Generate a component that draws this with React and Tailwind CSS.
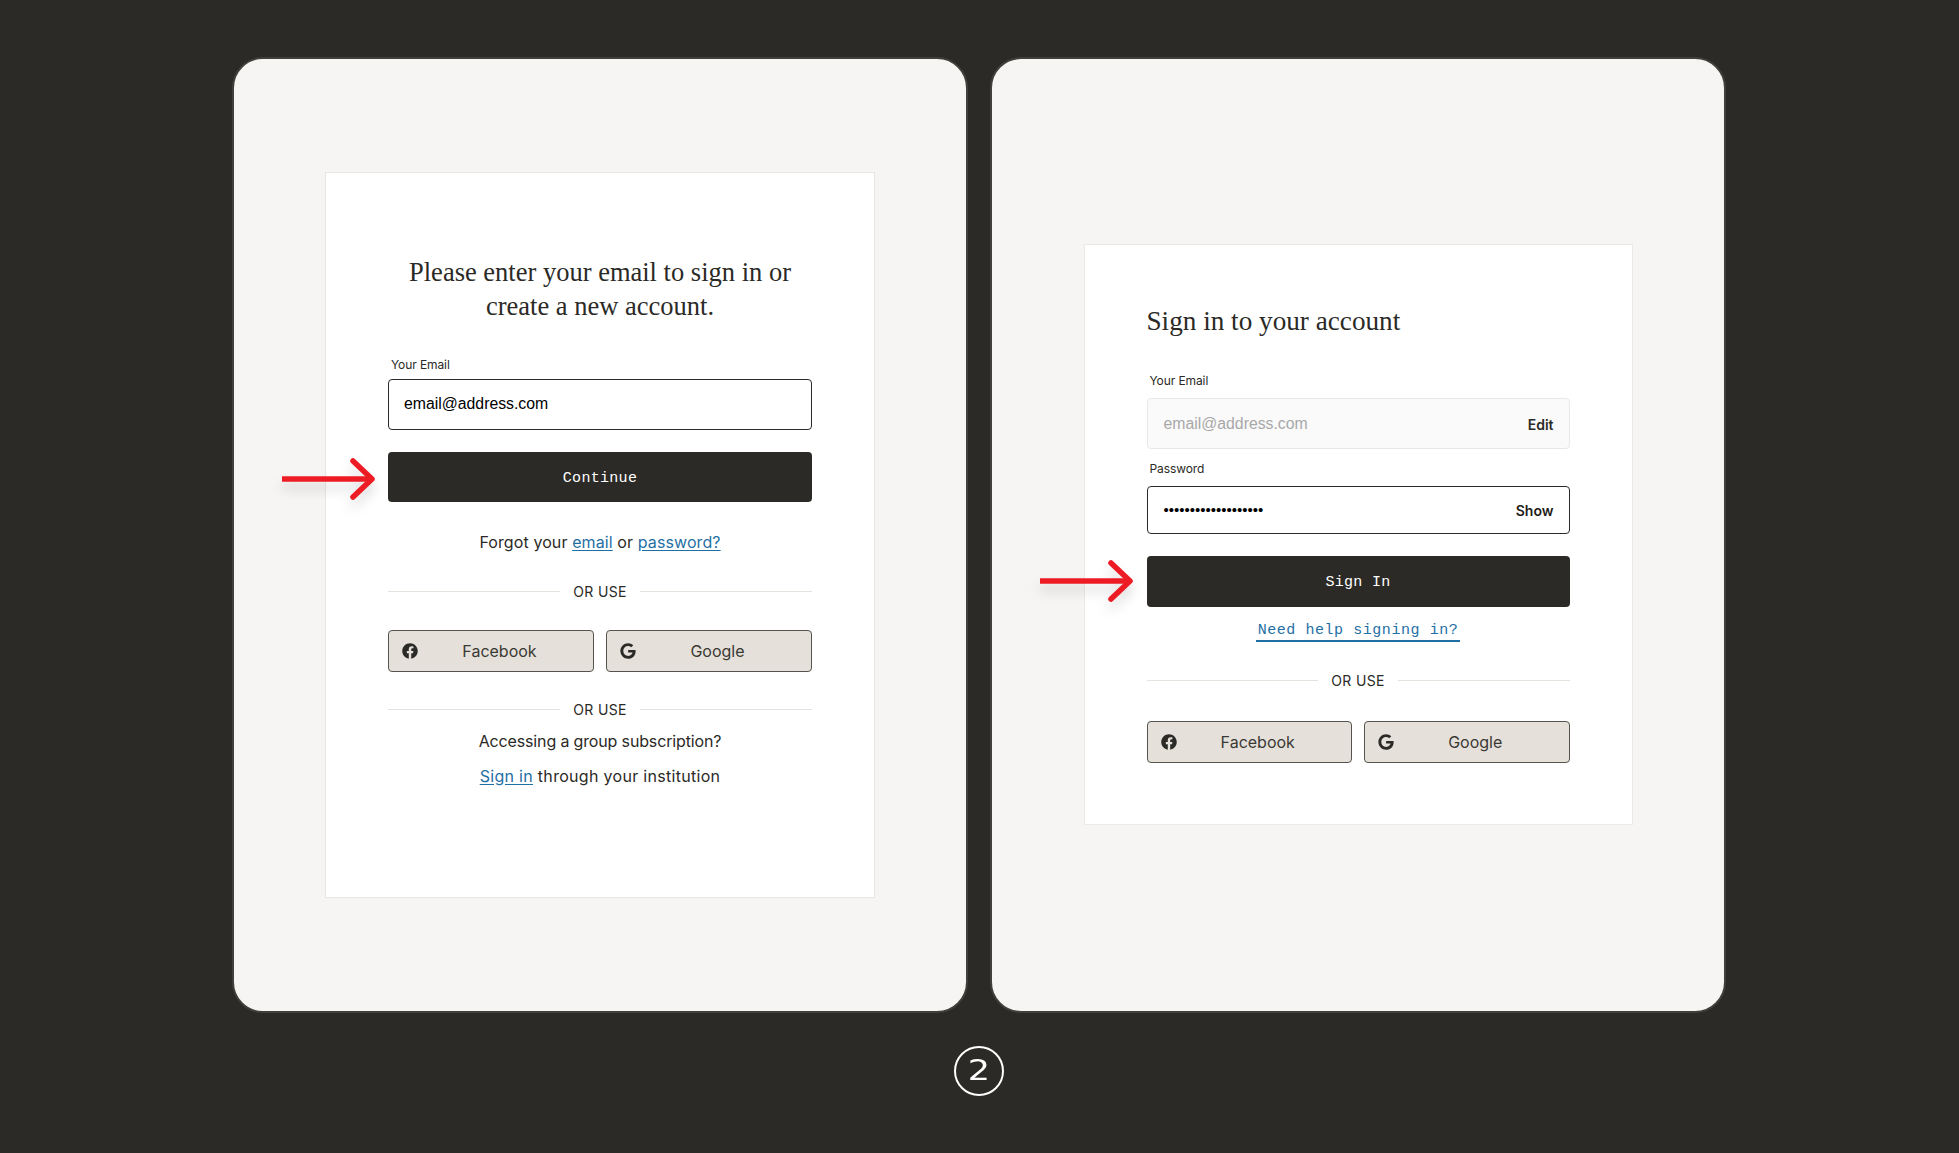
import React from 'react';
import { FaFacebook, FaGoogle } from 'react-icons/fa';

const BODY = "font-['Inter','Liberation_Sans',sans-serif]";
const MONO = "font-['Liberation_Mono',monospace]";
const SERIF = "font-['Liberation_Serif',serif]";
const ARIAL = "font-['Liberation_Sans',sans-serif]";

function RedArrow({ className }) {
  return (
    <svg className={`absolute drop-shadow-[0_8px_6px_rgba(0,0,0,0.14)] ${className}`} width="96" height="44" viewBox="0 0 96 44" fill="none">
      <path d="M0 22H89" stroke="#ed1c24" strokeWidth="5.5" />
      <path d="M71 4L90 22L71 40" stroke="#ed1c24" strokeWidth="5.5" strokeLinecap="round" strokeLinejoin="round" />
    </svg>
  );
}

function OrUse({ className = '' }) {
  return (
    <div className={`flex items-center h-5 ${className}`}>
      <div className="flex-1 h-px bg-[#e6e3de]"></div>
      <span className={`px-[13px] text-[14px] leading-5 tracking-[0.3px] text-[#2b2a26] ${BODY}`}>OR USE</span>
      <div className="flex-1 h-px bg-[#e6e3de]"></div>
    </div>
  );
}

function SocialButton({ icon: Icon, label }) {
  return (
    <button className={`flex flex-1 items-center h-[42px] pl-[13px] pr-3 bg-[#e5e1da] border border-[#55544f] rounded-[4px] text-[16px] text-[#3a3935] ${BODY}`}>
      <Icon className="w-4 h-4 text-[#2b2a26] shrink-0" />
      <span className="flex-1 text-center">{label}</span>
    </button>
  );
}

function SocialRow({ className = '' }) {
  return (
    <div className={`flex gap-3 ${className}`}>
      <SocialButton icon={FaFacebook} label="Facebook" />
      <SocialButton icon={FaGoogle} label="Google" />
    </div>
  );
}

function FieldLabel({ children, className = '' }) {
  return <div className={`pl-[3px] text-[12px] leading-4 tracking-[-0.1px] text-[#2b2a26] ${BODY} ${className}`}>{children}</div>;
}

function DarkButton({ children, className = '' }) {
  return (
    <button className={`relative block w-full pt-[5px] bg-[#2b2a26] rounded-[4px] text-white text-[15px] tracking-[0.3px] ${MONO} ${className}`}>
      {children}
    </button>
  );
}

function LinkText({ children }) {
  return <a className="text-[#1f6fa5] underline underline-offset-2">{children}</a>;
}

function Panel({ children }) {
  return (
    <div className="flex items-center justify-center w-[736px] h-[956px] bg-[#f6f5f3] border-2 border-[#403f3b] rounded-[31px]">
      {children}
    </div>
  );
}

export default function App() {
  return (
    <div className="w-[1959px] h-[1153px] bg-[#2b2a26] overflow-hidden pt-[57px] pl-[232px]">
      <div className="flex gap-[22px]">
        <Panel>
          <div className="relative w-[550px] h-[726px] mb-[1px] bg-white border border-[#e8e6e1] pt-[82px] px-[62px]">
            <h1 className={`text-center text-[26.5px] leading-[34px] text-[#2b2a26] ${SERIF}`}>
              Please enter your email to sign in or
              <br />
              create a new account.
            </h1>
            <FieldLabel className="mt-[34px]">Your Email</FieldLabel>
            <div className={`flex items-center h-[51px] mt-[6px] px-[15px] bg-white border border-[#2b2a26] rounded-[4px] text-[15.8px] text-black ${ARIAL}`}>
              email@address.com
            </div>
            <DarkButton className="h-[50px] mt-[22px]">Continue</DarkButton>
            <RedArrow className="left-[-44px] top-[284px]" />
            <p className={`mt-[28px] text-center text-[16px] leading-6 tracking-[0.1px] text-[#2b2a26] ${BODY}`}>
              Forgot your <LinkText>email</LinkText> or <LinkText>password?</LinkText>
            </p>
            <OrUse className="mt-[28px]" />
            <SocialRow className="mt-[28px]" />
            <OrUse className="mt-[28px]" />
            <p className={`mt-[9px] text-center text-[16px] leading-6 tracking-[-0.15px] text-[#2b2a26] ${BODY}`}>Accessing a group subscription?</p>
            <p className={`mt-[11px] text-center text-[16px] leading-6 tracking-[0.3px] text-[#2b2a26] ${BODY}`}>
              <LinkText>Sign in</LinkText> through your institution
            </p>
          </div>
        </Panel>
        <Panel>
          <div className="relative w-[549px] h-[581px] mb-[2px] bg-white border border-[#eceae6] pt-[59px] px-[62px]">
            <h1 className={`text-[27.2px] leading-[34px] text-[#2b2a26] ${SERIF}`}>Sign in to your account</h1>
            <FieldLabel className="mt-[35px]">Your Email</FieldLabel>
            <div className={`flex items-center justify-between h-[51px] mt-[9px] pt-[2px] pl-[16px] pr-[15px] bg-[#fafafa] border border-[#e8e8e6] rounded-[4px] text-[15.8px] text-[#a8a8a8] ${ARIAL}`}>
              <span>email@address.com</span>
              <span className={`text-[14px] font-semibold text-[#2b2a26] ${BODY}`}>Edit</span>
            </div>
            <FieldLabel className="mt-[12px]">Password</FieldLabel>
            <div className="flex items-center justify-between h-[48px] mt-[9px] pt-[2px] pl-[16px] pr-[15px] bg-white border border-[#2b2a26] rounded-[4px]">
              <span className={`text-[15px] text-black ${ARIAL}`}>•••••••••••••••••••</span>
              <span className={`text-[14px] font-semibold text-[#1c1b18] ${BODY}`}>Show</span>
            </div>
            <DarkButton className="h-[51px] mt-[22px]">Sign In</DarkButton>
            <RedArrow className="left-[-45px] top-[314px]" />
            <div className="flex justify-center mt-[14px]">
              <a className={`h-[21px] border-b-2 border-[#1f6fa5] px-[2px] text-[15px] leading-5 tracking-[0.55px] text-[#1f6fa5] ${MONO}`}>
                Need help signing in?
              </a>
            </div>
            <OrUse className="mt-[29px]" />
            <SocialRow className="mt-[30px]" />
          </div>
        </Panel>
      </div>
      <div className="flex justify-center w-[1494px] mt-[33px]">
        <div className="flex items-center justify-center w-[50px] h-[50px] rounded-full border-2 border-white text-white text-[28px] leading-none font-['DejaVu_Sans',sans-serif]">
          <span className="inline-block scale-x-125">2</span>
        </div>
      </div>
    </div>
  );
}
